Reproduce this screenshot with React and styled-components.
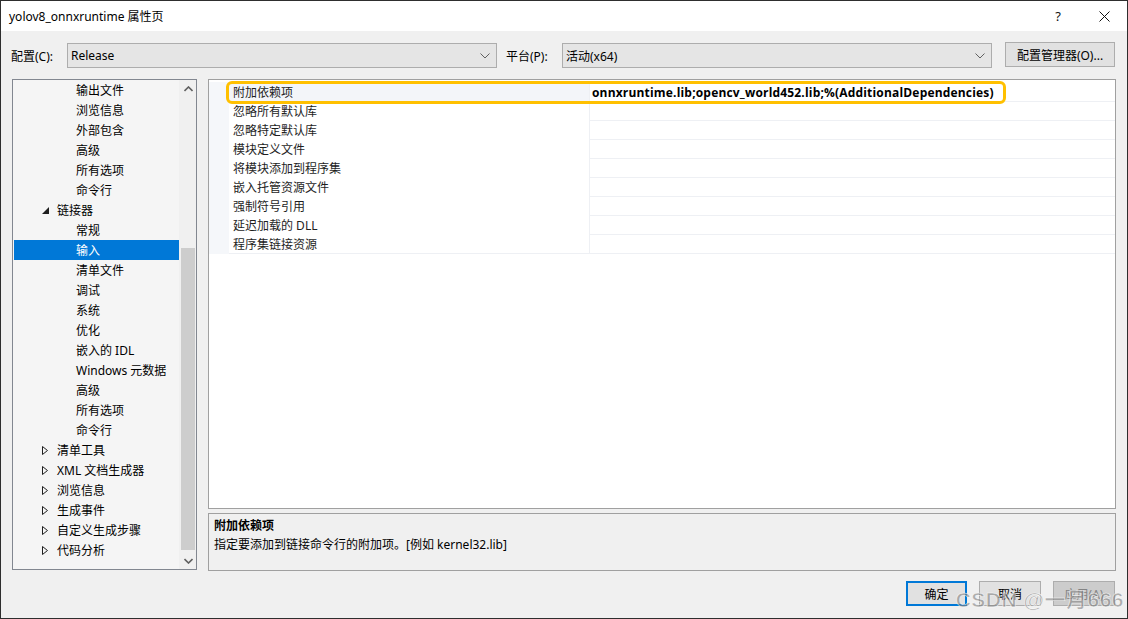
import React from "react";
import styled, { createGlobalStyle } from "styled-components";

const Global = createGlobalStyle`
  html, body { margin: 0; padding: 0; background: #f0f0f0; }
  * { box-sizing: border-box; }
`;

const FONT = `"Segoe UI", "Noto Sans", "Noto Sans CJK SC", sans-serif`;

const Window = styled.div`
  position: relative;
  width: 1128px;
  height: 619px;
  border: 1px solid #2e2e2e;
  background: #f0f0f0;
  display: flex;
  flex-direction: column;
  font-family: ${FONT};
  font-size: 12px;
  color: #000;
  overflow: hidden;
`;

const TitleBar = styled.div`
  height: 30px;
  background: #fff;
  display: flex;
  align-items: center;
  padding-left: 8px;
  flex-shrink: 0;
`;

const Title = styled.div`
  flex: 1;
  font-size: 12px;
`;

const TitleBtn = styled.div`
  width: 46px;
  height: 30px;
  display: flex;
  align-items: center;
  justify-content: center;
  font-size: 13px;
  color: #111;
`;

const Toolbar = styled.div`
  display: flex;
  align-items: flex-start;
  padding: 12px 0 0 10px;
  height: 48px;
  flex-shrink: 0;
`;

const Label = styled.div`
  width: ${(p) => p.$w}px;
  height: 25px;
  display: flex;
  align-items: center;
  white-space: nowrap;
`;

const Combo = styled.div`
  width: ${(p) => p.$w}px;
  height: 25px;
  border: 1px solid #adadad;
  background: #e5e5e5;
  display: flex;
  align-items: center;
  padding-left: 3px;
  margin-right: ${(p) => p.$mr}px;
`;

const ComboText = styled.div`
  flex: 1;
`;

const Chevron = styled.div`
  width: 22px;
  display: flex;
  justify-content: center;
  align-items: center;
`;

const Button = styled.div`
  width: ${(p) => p.$w}px;
  height: 25px;
  margin-top: ${(p) => p.$mt || 0}px;
  border: ${(p) => (p.$default ? "2px solid #0078d7" : "1px solid #adadad")};
  background: ${(p) => (p.$disabled ? "#cccccc" : "#e1e1e1")};
  color: ${(p) => (p.$disabled ? "#838383" : "#000")};
  display: flex;
  align-items: center;
  justify-content: center;
  white-space: nowrap;
`;

const Main = styled.div`
  display: flex;
  padding: 0 0 0 11px;
  gap: 11px;
  height: 492px;
  flex-shrink: 0;
`;

const Tree = styled.div`
  width: 185px;
  height: 491px;
  border: 1px solid #828790;
  background: #f5f5f5;
  display: flex;
`;

const TreeList = styled.div`
  flex: 1;
  padding: 0 0 0 1px;
`;

const TreeRow = styled.div`
  height: 20px;
  display: flex;
  align-items: center;
  padding-left: ${(p) => (p.$level === 2 ? 62 : 43)}px;
  background: ${(p) => (p.$selected ? "#0078d7" : "transparent")};
  color: ${(p) => (p.$selected ? "#fff" : "#000")};
  position: relative;
  white-space: nowrap;
`;

const Arrow = styled.span`
  position: absolute;
  left: 28px;
  top: 6px;
  width: 8px;
  height: 9px;
  display: flex;
  align-items: center;
`;

const ScrollBar = styled.div`
  width: 17px;
  background: #f0f0f0;
  display: flex;
  flex-direction: column;
  border-left: 1px solid #f0f0f0;
`;

const ScrollBtn = styled.div`
  height: 17px;
  display: flex;
  align-items: center;
  justify-content: center;
`;

const ScrollTrack = styled.div`
  flex: 1;
  display: flex;
  flex-direction: column;
  padding: 0 1px;
`;

const ScrollThumb = styled.div`
  margin-top: ${(p) => p.$top}px;
  height: ${(p) => p.$h}px;
  background: #cdcdcd;
`;

const RightCol = styled.div`
  width: 908px;
  display: flex;
  flex-direction: column;
  gap: 4px;
`;

const Grid = styled.div`
  height: 430px;
  border: 1px solid #a0a0a0;
  background: #fff;
  padding-top: 2px;
  position: relative;
`;

const GridRow = styled.div`
  display: grid;
  grid-template-columns: 20px 360px 1fr;
  height: 19px;
`;

const Gutter = styled.div`
  background: #f5f7fa;
`;

const NameCell = styled.div`
  background: ${(p) => (p.$active ? "#f3f5f9" : "#fff")};
  border-bottom: 1px solid #eef0f4;
  padding: 1px 0 0 4px;
  display: flex;
  align-items: center;
  white-space: nowrap;
  color: #1e1e1e;
`;

const ValueCell = styled.div`
  border-bottom: 1px solid #eef0f4;
  border-left: 1px solid #eef0f4;
  padding: 1px 0 0 2px;
  display: flex;
  align-items: center;
  font-weight: 700;
  white-space: nowrap;
  font-family: "Open Sans", "Noto Sans", sans-serif;
  letter-spacing: 0.18px;
`;

const Highlight = styled.div`
  position: absolute;
  left: 17px;
  top: 1px;
  width: 780px;
  height: 23px;
  border: 3px solid #ffc000;
  border-radius: 6px;
  pointer-events: none;
`;

const Desc = styled.div`
  height: 58px;
  border: 1px solid #a0a0a0;
  background: #f0f0f0;
  padding: 2px 5px;
  line-height: 19px;
`;

const DescTitle = styled.div`
  font-weight: 700;
`;

const Footer = styled.div`
  display: flex;
  justify-content: flex-end;
  gap: 12px;
  padding: 10px 12px 0 0;
`;

const Watermark = styled.div`
  position: absolute;
  right: 3px;
  bottom: 5px;
  font-family: "Liberation Sans", "Noto Sans CJK SC", sans-serif;
  font-size: 21px;
  font-weight: 700;
  color: rgba(130, 130, 130, 0.6);
  -webkit-text-stroke: 0.6px rgba(255, 255, 255, 0.85);
  letter-spacing: 0.5px;
  pointer-events: none;
`;

const Down = () => (
  <svg width="10" height="6" viewBox="0 0 10 6">
    <path d="M0.5 0.5 L5 5 L9.5 0.5" fill="none" stroke="#606060" strokeWidth="1" />
  </svg>
);

const Filled = () => (
  <svg width="7" height="7" viewBox="0 0 7 7">
    <path d="M7 0 L7 7 L0 7 Z" fill="#1e1e1e" />
  </svg>
);

const Hollow = () => (
  <svg width="6" height="9" viewBox="0 0 6 9">
    <path d="M0.5 0.5 L5.5 4.5 L0.5 8.5 Z" fill="none" stroke="#1e1e1e" strokeWidth="1" />
  </svg>
);

const ScrollUp = () => (
  <svg width="9" height="6" viewBox="0 0 9 6">
    <path d="M0.5 5 L4.5 1 L8.5 5" fill="none" stroke="#606060" strokeWidth="1.6" />
  </svg>
);
const ScrollDown = () => (
  <svg width="9" height="6" viewBox="0 0 9 6">
    <path d="M0.5 1 L4.5 5 L8.5 1" fill="none" stroke="#606060" strokeWidth="1.6" />
  </svg>
);

const treeItems = [
  { t: "输出文件", l: 2 },
  { t: "浏览信息", l: 2 },
  { t: "外部包含", l: 2 },
  { t: "高级", l: 2 },
  { t: "所有选项", l: 2 },
  { t: "命令行", l: 2 },
  { t: "链接器", l: 1, a: "open" },
  { t: "常规", l: 2 },
  { t: "输入", l: 2, sel: true },
  { t: "清单文件", l: 2 },
  { t: "调试", l: 2 },
  { t: "系统", l: 2 },
  { t: "优化", l: 2 },
  { t: "嵌入的 IDL", l: 2 },
  { t: "Windows 元数据", l: 2 },
  { t: "高级", l: 2 },
  { t: "所有选项", l: 2 },
  { t: "命令行", l: 2 },
  { t: "清单工具", l: 1, a: "closed" },
  { t: "XML 文档生成器", l: 1, a: "closed" },
  { t: "浏览信息", l: 1, a: "closed" },
  { t: "生成事件", l: 1, a: "closed" },
  { t: "自定义生成步骤", l: 1, a: "closed" },
  { t: "代码分析", l: 1, a: "closed" },
];

const props = [
  ["附加依赖项", "onnxruntime.lib;opencv_world452.lib;%(AdditionalDependencies)"],
  ["忽略所有默认库", ""],
  ["忽略特定默认库", ""],
  ["模块定义文件", ""],
  ["将模块添加到程序集", ""],
  ["嵌入托管资源文件", ""],
  ["强制符号引用", ""],
  ["延迟加载的 DLL", ""],
  ["程序集链接资源", ""],
];

export default function App() {
  return (
    <>
      <Global />
      <Window>
        <TitleBar>
          <Title>yolov8_onnxruntime 属性页</Title>
          <TitleBtn>?</TitleBtn>
          <TitleBtn>
            <svg width="11" height="11" viewBox="0 0 11 11">
              <path d="M0.5 0.5 L10.5 10.5 M10.5 0.5 L0.5 10.5" stroke="#111" strokeWidth="1" />
            </svg>
          </TitleBtn>
        </TitleBar>
        <Toolbar>
          <Label $w={56}>配置(C):</Label>
          <Combo $w={430} $mr={9}>
            <ComboText>Release</ComboText>
            <Chevron><Down /></Chevron>
          </Combo>
          <Label $w={56}>平台(P):</Label>
          <Combo $w={430} $mr={13}>
            <ComboText>活动(x64)</ComboText>
            <Chevron><Down /></Chevron>
          </Combo>
          <Button $w={110} $mt={-1}>配置管理器(O)...</Button>
        </Toolbar>
        <Main>
          <Tree>
            <TreeList>
              {treeItems.map((it, i) => (
                <TreeRow key={i} $level={it.l} $selected={it.sel}>
                  {it.a && <Arrow>{it.a === "open" ? <Filled /> : <Hollow />}</Arrow>}
                  {it.t}
                </TreeRow>
              ))}
            </TreeList>
            <ScrollBar>
              <ScrollBtn><ScrollUp /></ScrollBtn>
              <ScrollTrack>
                <ScrollThumb $top={151} $h={302} />
              </ScrollTrack>
              <ScrollBtn><ScrollDown /></ScrollBtn>
            </ScrollBar>
          </Tree>
          <RightCol>
            <Grid>
              {props.map(([n, v], i) => (
                <GridRow key={i}>
                  <Gutter />
                  <NameCell $active={i === 0}>{n}</NameCell>
                  <ValueCell>{v}</ValueCell>
                </GridRow>
              ))}
              <Highlight />
            </Grid>
            <Desc>
              <DescTitle>附加依赖项</DescTitle>
              <div>指定要添加到链接命令行的附加项。[例如 kernel32.lib]</div>
            </Desc>
          </RightCol>
        </Main>
        <Footer>
          <Button $w={61} $default>确定</Button>
          <Button $w={62}>取消</Button>
          <Button $w={62} $disabled>应用(A)</Button>
        </Footer>
        <Watermark>CSDN @一月666</Watermark>
      </Window>
    </>
  );
}
